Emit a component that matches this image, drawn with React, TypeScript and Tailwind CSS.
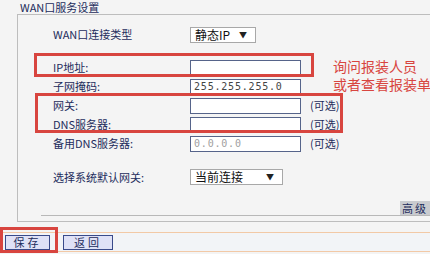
const cjk = "font-['SimSun','Noto_Sans_CJK_SC',sans-serif]";

function Field({ label, value, optional, muted }: { label: string; value?: string; optional?: boolean; muted?: boolean }) {
  return (
    <div className="flex h-[19px] items-center">
      <div className="w-[172px] pl-[35px] text-[11px] leading-none text-[#1d2c5c]">{label}</div>
      <div
        className={`flex h-[16px] w-[111px] items-center border border-[#56648a] bg-white px-[3px] font-['DejaVu_Sans_Mono',monospace] text-[10px] tracking-[0.8px] ${
          muted ? "text-[#a0a0a0]" : "text-[#444]"
        }`}
      >
        {value}
      </div>
      {optional && <span className="ml-[9px] text-[11px] leading-none text-[#1d2c5c]">(可选)</span>}
    </div>
  );
}

function Select({ value, width }: { value: string; width: string }) {
  return (
    <div className={`flex h-[16px] ${width} items-center justify-between border border-[#a8a8a8] bg-white pl-[4px] pr-[8px]`}>
      <span className="text-[12px] leading-none text-[#111]">{value}</span>
      <span className="text-[8px] leading-none text-[#222]">▼</span>
    </div>
  );
}

export default function App() {
  return (
    <div className={`relative h-[254px] w-[430px] overflow-hidden bg-[#f4f4f4] ${cjk}`}>
      <div className="h-[14px] pl-[20px] pt-[2px] text-[11px] leading-[11px] text-[#1d2c5c]">WAN口服务设置</div>

      <div className="ml-[17px] h-[208px] border-l border-t border-b border-[#bdbdbd]">
        <div className="flex h-[28px] items-end">
          <div className="w-[172px] pb-[3px] pl-[35px] text-[11px] leading-none text-[#1d2c5c]">WAN口连接类型</div>
          <Select value="静态IP" width="w-[66px]" />
        </div>

        <div className="mt-[15px] flex flex-col">
          <Field label="IP地址:" />
          <Field label="子网掩码:" value="255.255.255.0" />
          <Field label="网关:" optional />
          <Field label="DNS服务器:" optional />
          <Field label="备用DNS服务器:" value="0.0.0.0" optional muted />
        </div>

        <div className="mt-[16px] flex h-[16px] items-center">
          <div className="w-[172px] pl-[35px] text-[11px] leading-none text-[#1d2c5c]">选择系统默认网关:</div>
          <Select value="当前连接" width="w-[93px]" />
        </div>

        <div className="mt-[16px] flex items-end justify-end">
          <div className="flex h-[14px] w-[30px] items-center justify-center bg-[#c9cbcf] text-[11px] leading-none tracking-[2px] text-[#1d2c5c]">
            高级
          </div>
        </div>
        <div className="ml-[23px] border-t border-[#b8b8b8]" />
      </div>

      <div className="mt-[10px] flex h-[20px] items-center gap-[13px] border-t border-b border-[#f2c9a6] bg-[#f2f4f7] pl-[5px]">
        <button className="flex h-[15px] w-[45px] items-center justify-center border border-[#3a4a8a] bg-[#dfe1f6] text-[11px] leading-none tracking-[3px] text-[#1d2c5c]">
          保存
        </button>
        <button className="flex h-[15px] w-[50px] items-center justify-center border border-[#3a4a8a] bg-[#dfe1f6] text-[11px] leading-none tracking-[3px] text-[#1d2c5c]">
          返回
        </button>
      </div>

      {/* annotation overlays */}
      <div className="absolute left-[34px] top-[53px] h-[24px] w-[280px] border-[3px] border-[#d8453f]" />
      <div className="absolute left-[35px] top-[93px] h-[40px] w-[308px] border-[3px] border-[#d8453f]" />
      <div className="absolute left-0 top-[227px] h-[26px] w-[58px] border-[3px] border-[#d8453f]" />
      <div className="absolute left-[333px] top-[59px] flex flex-col gap-[3px] whitespace-nowrap text-[14px] leading-[15px] text-[#d8453f]">
        <div>询问报装人员</div>
        <div>或者查看报装单</div>
      </div>
    </div>
  );
}
